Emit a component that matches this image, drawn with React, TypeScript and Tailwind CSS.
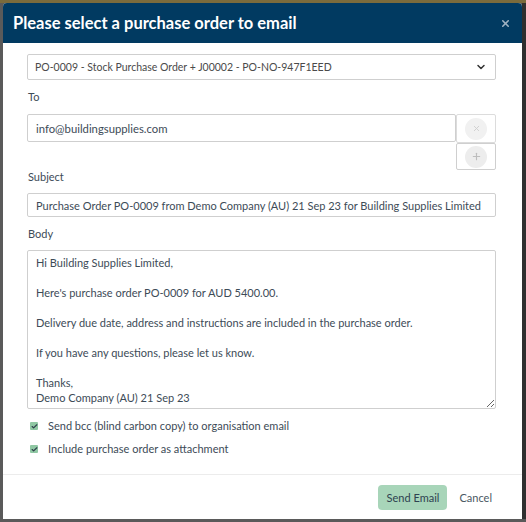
import React, { useState } from 'react';
import { ChevronDown, X, Plus, Check } from 'lucide-react';

const body = `Hi Building Supplies Limited,

Here's purchase order PO-0009 for AUD 5400.00.

Delivery due date, address and instructions are included in the purchase order.

If you have any questions, please let us know.

Thanks,
Demo Company (AU) 21 Sep 23`;

const Checkbox = ({ checked, label }: { checked: boolean; label: string }) => (
    <label className="flex items-center gap-[10px] pl-[3px] h-[18px]">
        <span className="w-[8px] h-[8px] bg-[#8fc7a3] flex items-center justify-center rounded-[1px]">
            {checked && <Check className="w-[7px] h-[7px] text-[#2e3e4a]" strokeWidth={4} />}
        </span>
        <span>{label}</span>
    </label>
);

export default function App() {
    const [to, setTo] = useState('info@buildingsupplies.com');
    const [subject, setSubject] = useState('Purchase Order PO-0009 from Demo Company (AU) 21 Sep 23 for Building Supplies Limited');
    const [text, setText] = useState(body);

    return (
        <div className="w-[526px] h-[522px] bg-[#585858] flex flex-col overflow-hidden" style={{ fontFamily: 'Lato, sans-serif' }}>
            <div className="h-[3px] bg-[#7b6b3c] shrink-0" />
            <div className="flex flex-1 min-h-0">
                <div className="w-[3px] bg-[#5a5a5a]" />
                <div className="w-[519px] h-[516px] bg-white rounded-t-[4px] flex flex-col overflow-hidden text-[11px] leading-[18px] text-[#3d4b57]">
                    <div className="h-[40px] bg-[#013a61] flex items-center justify-between pl-[10px] pr-[11px] shrink-0">
                        <h2 className="text-[16.5px] font-bold text-white">Please select a purchase order to email</h2>
                        <X className="w-[11px] h-[11px] text-[#9fb2c2]" strokeWidth={3.5} />
                    </div>

                    <div className="px-[24px] pt-[11px] flex flex-col">
                        <div className="h-[26px] w-[469px] border border-[#cfcfcf] rounded-[2px] flex items-center justify-between pl-[7px] pr-[8px] text-[#4a4a4a] text-[10.5px]">
                            <span>PO-0009 - Stock Purchase Order + J00002 - PO-NO-947F1EED</span>
                            <ChevronDown className="w-[12px] h-[12px] text-[#333]" strokeWidth={3} />
                        </div>

                        <div className="mt-[8px] mb-[8px] pl-[1px] h-[18px]">To</div>
                        <div className="flex h-[56px]">
                            <input
                                className="w-[429px] h-[28px] border border-[#cfcfcf] rounded-[2px] px-[8px] outline-none text-[#3d4b57] text-[11.3px]"
                                value={to}
                                onChange={(e) => setTo(e.target.value)}
                            />
                            <div className="flex flex-col">
                                <button className="w-[40px] h-[29px] border border-[#dcdcdc] rounded-[2px] flex items-center justify-center">
                                    <span className="w-[22px] h-[22px] rounded-full bg-[#f1f1f1] flex items-center justify-center">
                                        <X className="w-[9px] h-[9px] text-[#cfcfcf]" strokeWidth={2.5} />
                                    </span>
                                </button>
                                <button className="w-[40px] h-[27px] border border-[#cfcfcf] rounded-[2px] flex items-center justify-center">
                                    <span className="w-[22px] h-[22px] rounded-full bg-[#ededed] flex items-center justify-center">
                                        <Plus className="w-[11px] h-[11px] text-[#bdbdbd]" strokeWidth={2.5} />
                                    </span>
                                </button>
                            </div>
                        </div>

                        <div className="-mt-[2px] mb-[7px] pl-[1px] h-[18px]">Subject</div>
                        <input
                            className="w-[469px] h-[24px] border border-[#cfcfcf] rounded-[2px] px-[8px] outline-none text-[#3d4b57]"
                            value={subject}
                            onChange={(e) => setSubject(e.target.value)}
                        />

                        <div className="mt-[8px] mb-[7px] pl-[1px] h-[18px]">Body</div>
                        <textarea
                            className="w-[469px] h-[159px] border border-[#cfcfcf] rounded-[2px] px-[8px] py-[4px] leading-[15px] outline-none text-[#3d4b57] resize-y block"
                            value={text}
                            onChange={(e) => setText(e.target.value)}
                        />

                        <div className="flex flex-col gap-[5px] mt-[8px]">
                            <Checkbox checked label="Send bcc (blind carbon copy) to organisation email" />
                            <Checkbox checked label="Include purchase order as attachment" />
                        </div>
                    </div>

                    <div className="mt-[16px] border-t border-[#ececec] flex items-center justify-end gap-[12px] pt-[10px] pr-[30px]">
                        <button className="h-[25px] w-[69px] rounded-[4px] bg-[#a8d5b9] text-[#2e4250]">Send Email</button>
                        <button className="text-[#4a5863]">Cancel</button>
                    </div>
                </div>
                <div className="w-[4px] bg-[#2f2f2f]" />
            </div>
            <div className="h-[3px] bg-[#5a5a5a] shrink-0" />
        </div>
    );
}
